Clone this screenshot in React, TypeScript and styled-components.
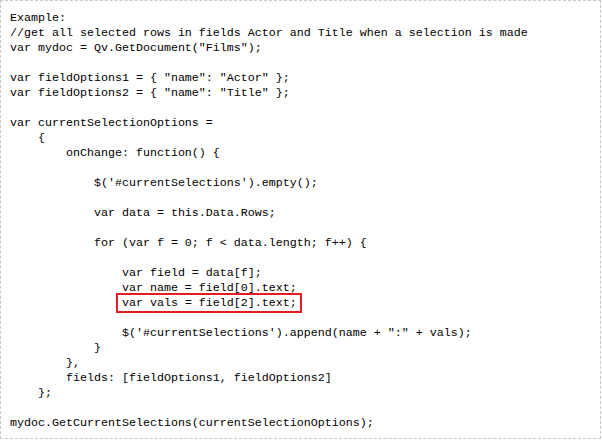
import React from "react";
import styled, { createGlobalStyle } from "styled-components";

const GlobalStyle = createGlobalStyle`
  html, body {
    margin: 0;
    padding: 0;
    background: #ffffff;
  }
`;

const Frame = styled.div`
  box-sizing: border-box;
  width: 601px;
  height: 439px;
  border: 1px dashed #c8c8c8;
  padding: 10px 9px;
  background: #ffffff;
`;

const Code = styled.pre`
  margin: 0;
  font-family: "Liberation Mono", "Courier New", monospace;
  font-size: 11.67px;
  line-height: 15px;
  color: #000000;
  white-space: pre;
`;

const Marked = styled.span`
  position: relative;
  &::after {
    content: "";
    position: absolute;
    top: -3px;
    bottom: -3px;
    left: -6px;
    right: -5px;
    border: 2px solid #e51c23;
  }
`;

const before = `Example:
//get all selected rows in fields Actor and Title when a selection is made
var mydoc = Qv.GetDocument("Films");

var fieldOptions1 = { "name": "Actor" };
var fieldOptions2 = { "name": "Title" };

var currentSelectionOptions =
    {
        onChange: function() {

            $('#currentSelections').empty();

            var data = this.Data.Rows;

            for (var f = 0; f < data.length; f++) {

                var field = data[f];
                var name = field[0].text;
                `;

const after = `

                $('#currentSelections').append(name + ":" + vals);
            }
        },
        fields: [fieldOptions1, fieldOptions2]
    };

mydoc.GetCurrentSelections(currentSelectionOptions);`;

export default function App() {
  return (
    <>
      <GlobalStyle />
      <Frame>
        <Code>
          {before}
          <Marked>var vals = field[2].text;</Marked>
          {after}
        </Code>
      </Frame>
    </>
  );
}
